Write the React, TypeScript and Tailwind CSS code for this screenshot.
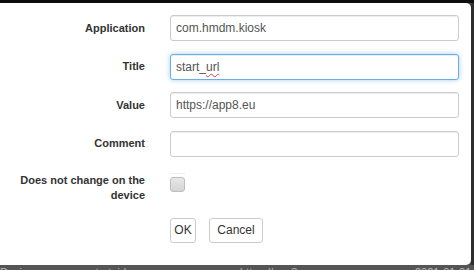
import React from "react";

const font = { fontFamily: '"Liberation Sans", Arial, sans-serif' };

function Field({ label, children }: { label: React.ReactNode; children: React.ReactNode }) {
  return (
    <div className="flex items-center">
      <div className="w-[145px] shrink-0 text-right text-[11px] font-bold leading-[15px] text-[#333]">{label}</div>
      <div className="ml-[25px] flex-1">{children}</div>
    </div>
  );
}

function Input({ value, focused }: { value?: React.ReactNode; focused?: boolean }) {
  return (
    <div
      className={
        "h-[26px] w-[289px] rounded-[3px] border bg-white px-[5px] text-[12px] leading-[24px] text-[#555] " +
        (focused
          ? "border-[#66afe9] shadow-[inset_0_1px_1px_rgba(0,0,0,0.075),0_0_5px_rgba(102,175,233,0.6)]"
          : "border-[#ccc] shadow-[inset_0_1px_1px_rgba(0,0,0,0.075)]")
      }
    >
      {value}
    </div>
  );
}

export default function App() {
  return (
    <div className="relative h-[270px] w-[474px] overflow-hidden bg-[#4a4a4a]" style={font}>
      <div className="h-[3px] bg-[#0d0d0d]" />
      <div className="flex">
        <div className="h-[262px] w-[471px] rounded-r-[5px] bg-white pt-[12px]">
          <div className="flex flex-col gap-y-[12.5px]">
            <Field label="Application">
              <Input value="com.hmdm.kiosk" />
            </Field>
            <Field label="Title">
              <Input
                focused
                value={
                  <>
                    start_
                    <span className="underline decoration-[#e04040] decoration-wavy decoration-1 underline-offset-2">url</span>
                  </>
                }
              />
            </Field>
            <Field label="Value">
              <Input value="https://app8.eu" />
            </Field>
            <Field label="Comment">
              <Input />
            </Field>
          </div>
          <div className="mt-[16px] flex items-start">
            <div className="w-[145px] shrink-0 text-right text-[11px] font-bold leading-[15px] text-[#333]">
              Does not change on the
              <br />
              device
            </div>
            <div className="ml-[25px]">
              <div className="mb-[3px] h-px w-[15px] bg-[#eee]" />
              <div className="h-[15px] w-[15px] rounded-[3px] border border-[#bdbdbd] bg-gradient-to-b from-[#e8e8e8] to-[#d4d4d4]" />
            </div>
          </div>
          <div className="ml-[170px] mt-[15px] flex gap-[13px]">
            <button className="h-[25px] w-[26px] rounded-[3px] border border-[#ccc] bg-white text-[12px] text-[#333]">OK</button>
            <button className="h-[25px] w-[54px] rounded-[3px] border border-[#ccc] bg-white text-[12px] text-[#333]">Cancel</button>
          </div>
        </div>
        <div className="h-[262px] flex-1 bg-[#2e2e2e]" />
      </div>
      <div className="relative h-[5px] overflow-hidden bg-[#555]">
        <div className="absolute left-0 top-[1px] flex text-[11px] leading-[12px] text-[#bbb]">
          <span className="w-[90px]">Device</span>
          <span className="w-[150px]">start_id</span>
          <span className="w-[175px]">https://app8.eu</span>
          <span>2021-01-01</span>
        </div>
      </div>
    </div>
  );
}
